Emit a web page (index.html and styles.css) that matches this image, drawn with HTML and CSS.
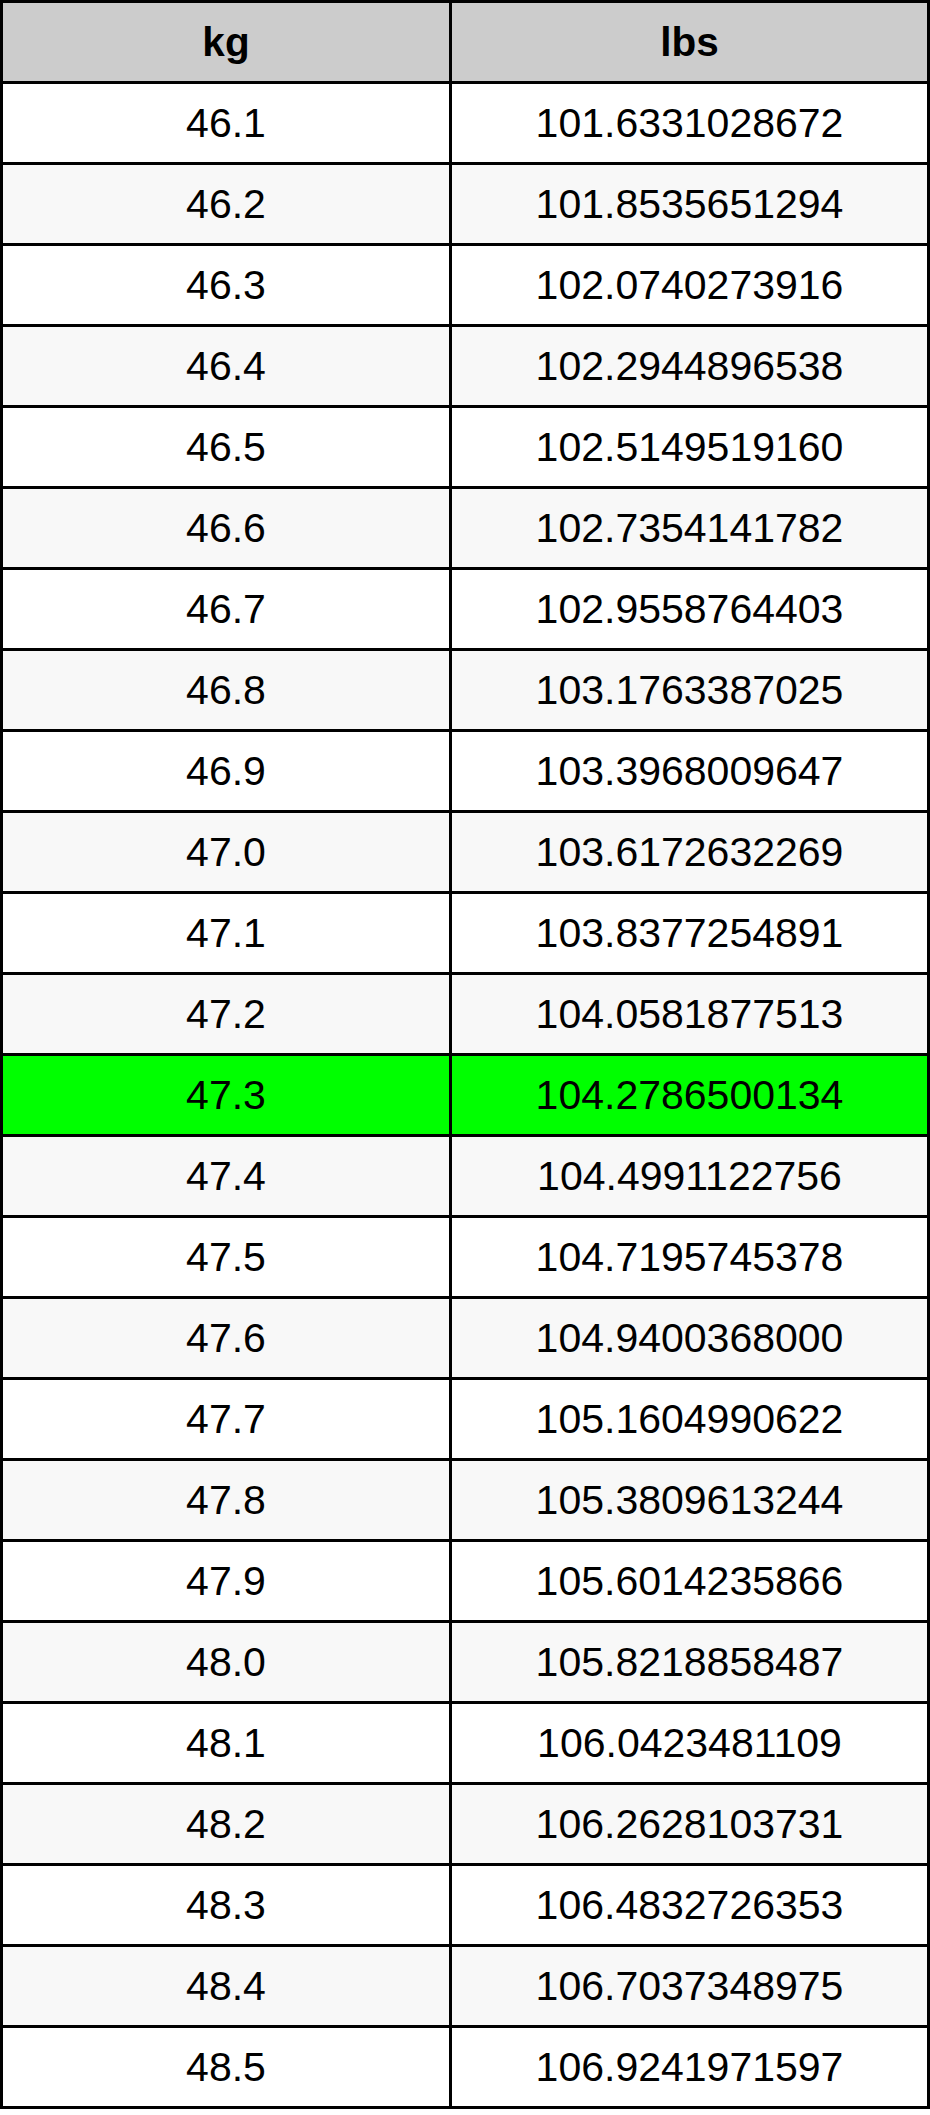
FILE: index.html
```html
<!DOCTYPE html>
<html lang="en">
<head>
<meta charset="utf-8">
<title>kg to lbs</title>
<link rel="stylesheet" href="styles.css">
</head>
<body>
<table class="conv">
<thead>
<tr><th class="c1">kg</th><th class="c2">lbs</th></tr>
</thead>
<tbody>
<tr><td>46.1</td><td>101.6331028672</td></tr>
<tr class="alt"><td>46.2</td><td>101.8535651294</td></tr>
<tr><td>46.3</td><td>102.0740273916</td></tr>
<tr class="alt"><td>46.4</td><td>102.2944896538</td></tr>
<tr><td>46.5</td><td>102.5149519160</td></tr>
<tr class="alt"><td>46.6</td><td>102.7354141782</td></tr>
<tr><td>46.7</td><td>102.9558764403</td></tr>
<tr class="alt"><td>46.8</td><td>103.1763387025</td></tr>
<tr><td>46.9</td><td>103.3968009647</td></tr>
<tr class="alt"><td>47.0</td><td>103.6172632269</td></tr>
<tr><td>47.1</td><td>103.8377254891</td></tr>
<tr class="alt"><td>47.2</td><td>104.0581877513</td></tr>
<tr class="hl"><td>47.3</td><td>104.2786500134</td></tr>
<tr class="alt"><td>47.4</td><td>104.4991122756</td></tr>
<tr><td>47.5</td><td>104.7195745378</td></tr>
<tr class="alt"><td>47.6</td><td>104.9400368000</td></tr>
<tr><td>47.7</td><td>105.1604990622</td></tr>
<tr class="alt"><td>47.8</td><td>105.3809613244</td></tr>
<tr><td>47.9</td><td>105.6014235866</td></tr>
<tr class="alt"><td>48.0</td><td>105.8218858487</td></tr>
<tr><td>48.1</td><td>106.0423481109</td></tr>
<tr class="alt"><td>48.2</td><td>106.2628103731</td></tr>
<tr><td>48.3</td><td>106.4832726353</td></tr>
<tr class="alt"><td>48.4</td><td>106.7037348975</td></tr>
<tr><td>48.5</td><td>106.9241971597</td></tr>
</tbody>
</table>
</body>
</html>
```

FILE: styles.css
```css
html, body {
  margin: 0;
  padding: 0;
  background: #ffffff;
}

.conv {
  border-collapse: separate;
  border-spacing: 3px;
  background: #000000;
  font-family: "Liberation Sans", Arial, sans-serif;
  font-size: 41px;
  color: #000000;
}

.conv th,
.conv td {
  height: 78px;
  padding: 0;
  text-align: center;
  vertical-align: middle;
  background: #ffffff;
  line-height: 1;
}

.conv th {
  background: #cccccc;
  font-weight: bold;
  font-size: 40.5px;
}

.conv .c1 {
  width: 446px;
}

.conv .c2 {
  width: 475px;
}

.conv tr.alt td {
  background: #f8f8f8;
}

.conv tr.hl td {
  background: #00ff00;
}
```
